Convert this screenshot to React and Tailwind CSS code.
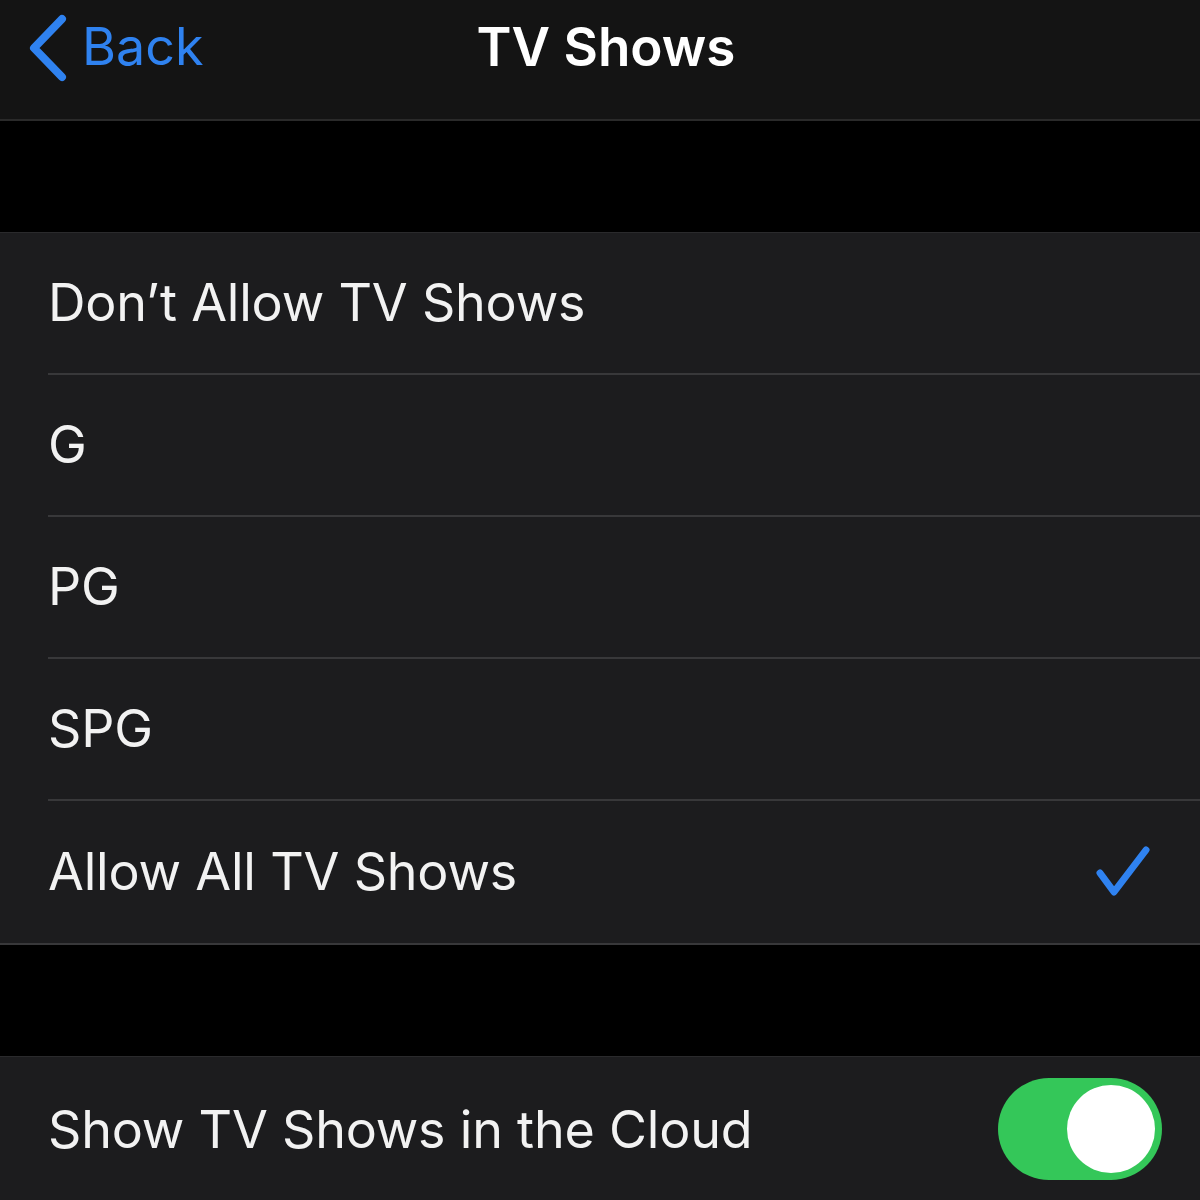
import React, { useState } from 'react';

const options = ["Don\u2019t Allow TV Shows", 'G', 'PG', 'SPG', 'Allow All TV Shows'];

const App = () => {
  const [selected, setSelected] = useState(4);
  const [cloud, setCloud] = useState(true);

  return (
    <div className="w-[1200px] h-[1200px] bg-black overflow-hidden text-white font-['Inter',sans-serif]">
      {/* nav bar */}
      <div className="relative h-[121px] bg-[#141414] border-b-2 border-[#2a2a2a] flex items-start">
        <button className="flex items-center pl-[26px] pt-[13px] text-[#2f82f0]">
          <svg width="44" height="70" viewBox="0 0 44 70" fill="none">
            <path d="M36 6 L8 35 L36 64" stroke="currentColor" strokeWidth="8" strokeLinecap="round" strokeLinejoin="round" />
          </svg>
          <span className="ml-[12px] text-[52px] leading-none -mt-[2px]">Back</span>
        </button>
        <h1 className="absolute left-0 right-0 top-[21px] text-center text-[53px] leading-none font-semibold pl-[12px]">TV Shows</h1>
      </div>

      <div className="h-[111px]" />

      {/* ratings group */}
      <div className="bg-[#1c1c1e] border-t border-[#2a2a2c] border-b-2 border-b-[#38383a]">
        {options.map((opt, i) => (
          <div
            key={opt}
            onClick={() => setSelected(i)}
            className="pl-[48px] h-[142px] flex"
          >
            <div className={`flex-1 flex items-center justify-between pr-[50px] ${i < options.length - 1 ? 'border-b-2 border-[#38383a]' : ''}`}>
              <span className="text-[52px] leading-none text-[#f2f2f2] tracking-[-0.2px]">{opt}</span>
              {selected === i && (
                <svg width="54" height="54" viewBox="0 0 54 54" fill="none">
                  <path d="M4 28 L18 47 L50 5" stroke="#2f82f0" strokeWidth="7" strokeLinecap="round" strokeLinejoin="round" />
                </svg>
              )}
            </div>
          </div>
        ))}
      </div>

      <div className="h-[111px]" />

      {/* cloud toggle */}
      <div className="bg-[#1c1c1e] border-t border-[#2a2a2c] h-[150px] pl-[48px] pr-[38px] flex items-center justify-between">
        <span className="text-[52px] leading-none text-[#f2f2f2] tracking-[-0.2px] -mt-[4px]">Show TV Shows in the Cloud</span>
        <button
          onClick={() => setCloud(!cloud)}
          className={`w-[164px] h-[102px] rounded-full flex items-center px-[7px] -mt-[6px] ${cloud ? 'bg-[#34c759] justify-end' : 'bg-[#3a3a3c] justify-start'}`}
        >
          <span className="w-[88px] h-[88px] rounded-full bg-white block" />
        </button>
      </div>
    </div>
  );
};

export default App;
